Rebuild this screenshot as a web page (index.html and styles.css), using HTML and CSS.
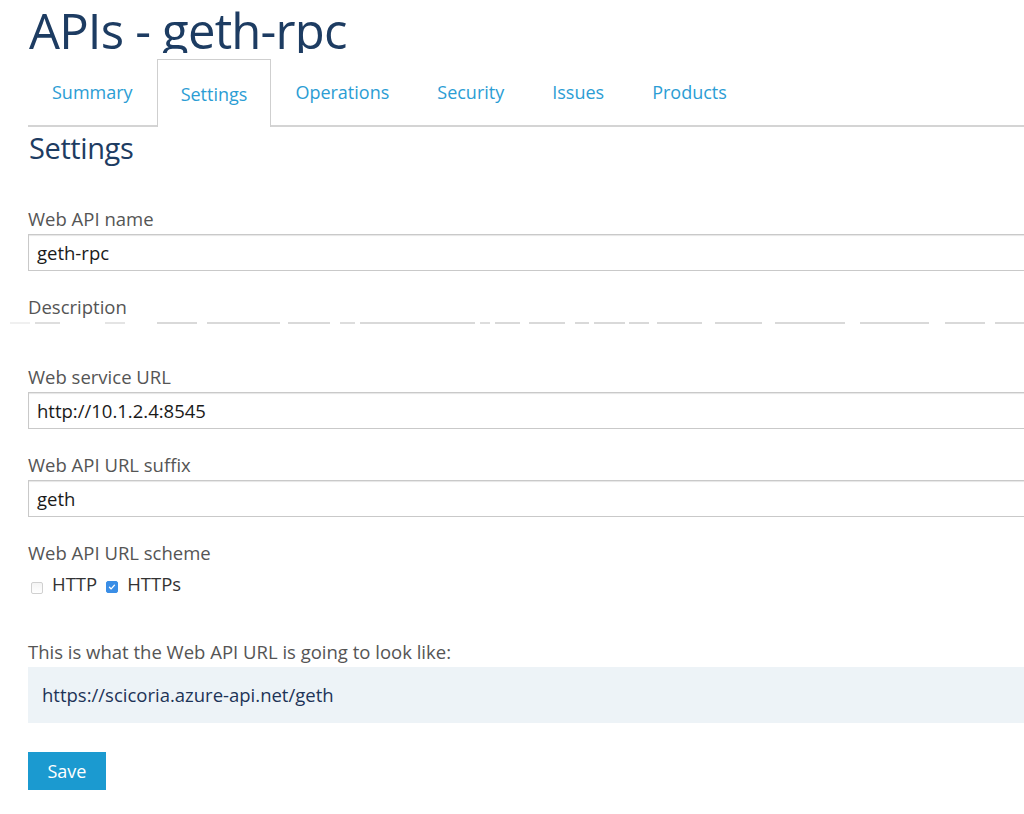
FILE: index.html
```html
<!DOCTYPE html>
<html>
<head>
<meta charset="utf-8">
<link rel="stylesheet" href="styles.css">
</head>
<body>
<div class="page">
  <h1 class="title">APIs - geth-rpc</h1>
  <ul class="tabs">
    <li class="tab">Summary</li>
    <li class="tab active">Settings</li>
    <li class="tab">Operations</li>
    <li class="tab">Security</li>
    <li class="tab">Issues</li>
    <li class="tab">Products</li>
  </ul>
  <h2 class="section">Settings</h2>
  <div class="form">
    <div class="field">
      <div class="label">Web API name</div>
      <div class="input">geth-rpc</div>
    </div>
    <div class="field desc">
      <div class="label">Description</div>
      <div class="torn"></div>
    </div>
    <div class="field">
      <div class="label">Web service URL</div>
      <div class="input">http://10.1.2.4:8545</div>
    </div>
    <div class="field">
      <div class="label">Web API URL suffix</div>
      <div class="input">geth</div>
    </div>
    <div class="field scheme">
      <div class="label">Web API URL scheme</div>
      <div class="checks">
        <span class="cb"></span><span class="cbtext">HTTP</span>
        <span class="cb checked"><svg viewBox="0 0 12 12" width="12" height="12"><path d="M3 6.3 L5 8.3 L9 3.8" fill="none" stroke="#fff" stroke-width="1.6" stroke-linecap="round" stroke-linejoin="round"/></svg></span><span class="cbtext">HTTPs</span>
      </div>
    </div>
    <div class="preview">
      <div class="label">This is what the Web API URL is going to look like:</div>
      <div class="urlbox">https://scicoria.azure-api.net/geth</div>
    </div>
    <div class="actions">
      <button class="save">Save</button>
    </div>
  </div>
</div>
</body>
</html>
```
FILE: styles.css
```css
html, body {
  margin: 0;
  padding: 0;
  background: #fff;
  overflow: hidden;
}
body {
  font-family: "Open Sans", "Noto Sans", sans-serif;
  width: 1024px;
  height: 814px;
}
.page {
  padding-left: 28px;
  margin-right: -20px;
}
.title {
  margin: 0 0 6px 0;
  height: 53px;
  overflow: hidden;
  font-weight: 400;
  font-size: 49px;
  line-height: 60px;
  color: #1d3c62;
  letter-spacing: -0.8px;
  padding-left: 1px;
}
.tabs {
  list-style: none;
  margin: 0;
  padding: 0;
  display: flex;
  border-bottom: 2px solid #d4d4d4;
  height: 66px;
}
.tab {
  padding: 18px 24px 0 24px;
  font-size: 18px;
  color: #2b9dd4;
  line-height: 30px;
}
.tab.active {
  border: 1px solid #cfcfcf;
  border-bottom: none;
  padding: 19px 23px 0 23px;
  margin-bottom: -2px;
  background: #fff;
  height: 48px;
}
.section {
  margin: 1px 0 0 0;
  font-weight: 400;
  font-size: 29px;
  color: #1d3c62;
  line-height: 40px;
  letter-spacing: -0.4px;
  padding-left: 1px;
}
.form {
  margin-top: 39px;
}
.field {
  margin-bottom: 24px;
}
.label {
  font-size: 18.5px;
  color: #555;
  line-height: 24px;
  margin-bottom: 3px;
}
.input {
  border: 1px solid #c9c9c9;
  box-shadow: inset 0 1px 1px #e6e6e6;
  height: 35px;
  line-height: 35px;
  padding-left: 8px;
  font-size: 18.5px;
  color: #1a1a1a;
}
.field.desc {
  margin-bottom: 41px;
}
.torn {
  height: 2px;
  margin-left: -28px;
  background: linear-gradient(90deg,
    transparent 0 10px, #f0f0f0 10px 30px, transparent 30px 35px,
    #dedede 35px 60px, transparent 60px 105px,
    #e4e4e4 105px 125px, transparent 125px 157px,
    #d9d9d9 157px 197px, transparent 197px 207px,
    #d9d9d9 207px 280px, transparent 280px 288px,
    #d9d9d9 288px 330px, transparent 330px 340px,
    #dddddd 340px 355px, transparent 355px 360px,
    #d9d9d9 360px 475px, transparent 475px 480px,
    #dddddd 480px 490px, transparent 490px 495px,
    #d9d9d9 495px 520px, transparent 520px 529px,
    #d9d9d9 529px 565px, transparent 565px 575px,
    #d9d9d9 575px 589px, transparent 589px 594px,
    #d9d9d9 594px 625px, transparent 625px 629px,
    #d9d9d9 629px 649px, transparent 649px 657px,
    #d9d9d9 657px 702px, transparent 702px 715px,
    #d9d9d9 715px 762px, transparent 762px 775px,
    #d9d9d9 775px 845px, transparent 845px 860px,
    #d9d9d9 860px 929px, transparent 929px 945px,
    #d9d9d9 945px 985px, transparent 985px 995px,
    #d9d9d9 995px 1024px, transparent 1024px);
}
.field.scheme {
  margin-bottom: 0;
}
.checks {
  display: flex;
  align-items: flex-start;
  height: 25px;
  padding-top: 4px;
}
.cb {
  box-sizing: border-box;
  width: 12px;
  height: 12px;
  border: 1px solid #d0d0d0;
  border-radius: 2px;
  margin-top: 10px;
  margin-left: 3px;
  display: inline-flex;
  align-items: center;
  justify-content: center;
  background: linear-gradient(#f4f4f4, #fff);
}
.cb.checked {
  background: #3a8ee6;
  border-color: #3a8ee6;
  margin-top: 9px;
  margin-left: 9px;
}
.cb svg {
  display: block;
}
.cbtext {
  font-size: 18.5px;
  line-height: 24px;
  color: #333;
  margin-left: 9px;
}
.preview {
  margin-top: 43px;
}
.urlbox {
  background: #edf3f7;
  height: 56px;
  line-height: 56px;
  padding-left: 14px;
  font-size: 18.5px;
  color: #1d3357;
}
.actions {
  margin-top: 29px;
}
.save {
  background: #1b9ad0;
  color: #fff;
  border: none;
  width: 78px;
  height: 38px;
  font-family: "Open Sans", "Noto Sans", sans-serif;
  font-size: 18px;
  padding: 0;
  cursor: pointer;
}
```
